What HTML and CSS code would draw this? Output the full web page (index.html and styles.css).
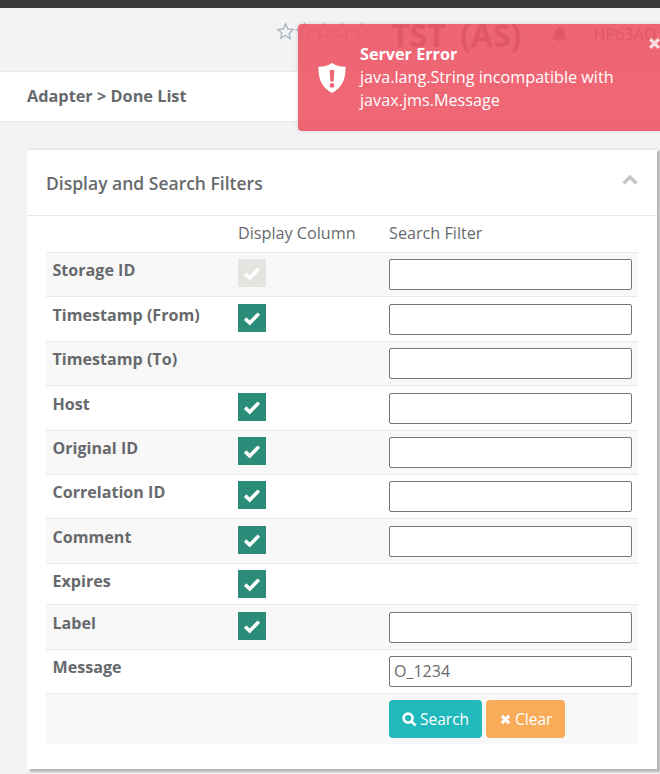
FILE: index.html
```html
<!DOCTYPE html>
<html lang="en">
<head>
<meta charset="utf-8">
<title>Adapter &gt; Done List</title>
<link rel="stylesheet" href="styles.css">
</head>
<body>
<div class="topbar"></div>
<header class="header">
  <div class="stars">
    <svg class="star star-main" viewBox="0 0 24 24"><path d="M12 2.500l2.900 6.300 6.900.8-5.100 4.700 1.400 6.800L12 17l-6.100 3.400 1.400-6.800L2.200 9.600l6.900-.8z"/></svg>
    <svg class="star" viewBox="0 0 24 24"><path d="M12 2.500l2.900 6.300 6.900.8-5.100 4.700 1.400 6.800L12 17l-6.100 3.400 1.400-6.800L2.200 9.600l6.900-.8z"/></svg>
    <svg class="star" viewBox="0 0 24 24"><path d="M12 2.500l2.900 6.300 6.900.8-5.100 4.700 1.400 6.800L12 17l-6.100 3.400 1.400-6.800L2.200 9.600l6.900-.8z"/></svg>
    <svg class="star" viewBox="0 0 24 24"><path d="M12 2.500l2.900 6.300 6.900.8-5.100 4.700 1.400 6.800L12 17l-6.100 3.400 1.400-6.800L2.200 9.600l6.900-.8z"/></svg>
    <svg class="star" viewBox="0 0 24 24"><path d="M12 2.500l2.900 6.300 6.900.8-5.100 4.700 1.400 6.800L12 17l-6.100 3.400 1.400-6.800L2.200 9.600l6.900-.8z"/></svg>
  </div>
  <div class="instance">TST (AS)</div>
  <svg class="bell" viewBox="0 0 24 24"><path d="M12 1.500c1 0 1.600.7 1.600 1.600 3.400.8 5.400 3.500 5.400 7 0 4.500 1 6.400 3 8.400v1.500H2v-1.500c2-2 3-3.900 3-8.400 0-3.500 2-6.200 5.400-7 0-.9.600-1.600 1.600-1.600zM9.500 21h5a2.500 2.500 0 0 1-5 0z"/></svg>
  <div class="user">HP63AQ</div>
</header>
<div class="breadcrumb">Adapter &gt; Done List</div>
<main class="content">
  <section class="card">
    <div class="card-title">
      <h2>Display and Search Filters</h2>
      <svg class="chevron" viewBox="0 0 16 10"><path d="M1.500 8.500L8 2l6.500 6.500"/></svg>
    </div>
    <div class="card-body">
      <div class="row row-head"><div></div><div>Display Column</div><div>Search Filter</div></div>
      <div class="row odd"><div class="name">Storage ID</div><div><span class="check check-off"><svg viewBox="0 0 16 16"><path d="M2.500 8.500l3.700 3.500 7.300-7.500"/></svg></span></div><div><input class="field" type="text"></div></div>
      <div class="row"><div class="name">Timestamp (From)</div><div><span class="check"><svg viewBox="0 0 16 16"><path d="M2.500 8.500l3.700 3.500 7.300-7.500"/></svg></span></div><div><input class="field" type="text"></div></div>
      <div class="row odd"><div class="name">Timestamp (To)</div><div></div><div><input class="field" type="text"></div></div>
      <div class="row"><div class="name">Host</div><div><span class="check"><svg viewBox="0 0 16 16"><path d="M2.500 8.500l3.700 3.500 7.300-7.500"/></svg></span></div><div><input class="field" type="text"></div></div>
      <div class="row odd"><div class="name">Original ID</div><div><span class="check"><svg viewBox="0 0 16 16"><path d="M2.500 8.500l3.700 3.500 7.300-7.500"/></svg></span></div><div><input class="field" type="text"></div></div>
      <div class="row"><div class="name">Correlation ID</div><div><span class="check"><svg viewBox="0 0 16 16"><path d="M2.500 8.500l3.700 3.500 7.300-7.500"/></svg></span></div><div><input class="field" type="text"></div></div>
      <div class="row odd"><div class="name">Comment</div><div><span class="check"><svg viewBox="0 0 16 16"><path d="M2.500 8.500l3.700 3.500 7.300-7.500"/></svg></span></div><div><input class="field" type="text"></div></div>
      <div class="row row-short"><div class="name">Expires</div><div><span class="check"><svg viewBox="0 0 16 16"><path d="M2.500 8.500l3.700 3.500 7.300-7.500"/></svg></span></div><div></div></div>
      <div class="row odd"><div class="name">Label</div><div><span class="check"><svg viewBox="0 0 16 16"><path d="M2.500 8.500l3.700 3.500 7.300-7.500"/></svg></span></div><div><input class="field" type="text"></div></div>
      <div class="row"><div class="name">Message</div><div></div><div><input class="field" type="text" value="O_1234"></div></div>
      <div class="row odd row-actions"><div></div><div></div><div class="actions">
        <button class="btn btn-search" type="button"><svg viewBox="0 0 16 16"><circle cx="6.500" cy="6.500" r="4.800"/><path d="M10 10l4.500 4.500"/></svg>Search</button>
        <button class="btn btn-clear" type="button"><svg class="icon-x" viewBox="0 0 16 16"><path d="M3.500 3.500l9 9M12.500 3.500l-9 9"/></svg>Clear</button>
      </div></div>
    </div>
  </section>
</main>
<aside class="toast">
  <svg class="shield" viewBox="0 0 28 30"><path fill-rule="evenodd" d="M14 0c3 2.400 7.600 3.600 13.500 3.700C27.800 15 25 24 14 30 3 24 .2 15 .5 3.700 6.400 3.600 11 2.400 14 0zM11.700 7l.7 11.500h3.200L16.300 7zM14 20a2.400 2.400 0 1 0 0 4.800 2.400 2.400 0 0 0 0-4.800z"/></svg>
  <div class="toast-text">
    <div class="toast-title">Server Error</div>
    <div>java.lang.String incompatible with javax.jms.Message</div>
  </div>
  <svg class="toast-close" viewBox="0 0 12 12"><path d="M2 2l8 8M10 2l-8 8"/></svg>
</aside>
</body>
</html>
```

FILE: styles.css
```css
* { box-sizing: border-box; }
html, body { margin: 0; height: 100%; overflow: hidden; }
body {
  position: relative;
  background: #f3f3f4;
  color: #676a6c;
  font-family: "Open Sans", sans-serif;
  font-size: 16.2px;
}
.topbar { height: 8px; background: #3a3a3a; }
.header {
  height: 63px;
  display: flex;
  align-items: flex-start;
  padding: 14px 0 0 276px;
  white-space: nowrap;
}
.stars { display: flex; gap: 0; margin-right: 20px; }
.star { width: 19px; height: 19px; fill: none; stroke: #a9b4c0; stroke-width: 1.700; }
.instance { margin-top: -7px; font-size: 32px; font-weight: 700; line-height: 40px; word-spacing: 6px; }
.bell { width: 17px; height: 18px; margin: 3px 0 0 30px; fill: #676a6c; }
.user { margin: 1px 0 0 25px; line-height: 22px; }
.breadcrumb {
  height: 51px;
  padding-left: 27px;
  line-height: 49px;
  background: #fff;
  border-top: 1px solid #e7eaec;
  border-bottom: 1px solid #e7eaec;
  font-weight: 700;
  font-size: 16.300px;
}
.content { padding: 26px 3px 0 27px; }
.card {
  height: 621px;
  background: #fff;
  border-top: 2px solid #e7eaec;
  box-shadow: 3px 3px 2px #b5b5b5;
}
.card-title {
  height: 66px;
  padding: 0 19px;
  display: flex;
  align-items: center;
  justify-content: space-between;
  border-bottom: 1px solid #e7eaec;
}
.card-title h2 { margin: 0; font-size: 17.500px; font-weight: 600; }
.chevron { width: 16px; height: 10px; margin-top: -5px; fill: none; stroke: #c4c6c8; stroke-width: 3.400; }
.card-body { padding: 0 19px; }
.row {
  display: grid;
  grid-template-columns: 192px 151px 1fr;
  height: 44.400px;
  border-bottom: 1px solid #e7eaec;
}
.row.odd { background: #f8f8f8; }
.row > div { padding-top: 6.400px; }
.row .name { padding: 5.400px 0 0 6.500px; font-weight: 700; font-size: 16.100px; line-height: 24px; }
.row.row-head { height: 37px; }
.row.row-head > div { padding-top: 4px; line-height: 26px; }
.row.row-short { height: 41.400px; }
.row.row-actions { height: 50px; border-bottom: 0; }
.check {
  display: flex;
  align-items: center;
  justify-content: center;
  width: 28px;
  height: 28px;
  background: #2a8c79;
}
.check svg { width: 20px; height: 20px; fill: none; stroke: #fff; stroke-width: 2.800; }
.check-off { background: #e5e4e0; }
.field {
  display: block;
  width: 243px;
  height: 31px;
  padding: 0 4px;
  border: 1px solid #767676;
  border-radius: 2px;
  background: #fff;
  color: #676a6c;
  font-family: inherit;
  font-size: 16px;
}
.actions { display: flex; gap: 4px; }
.btn {
  display: flex;
  align-items: center;
  gap: 3px;
  height: 38px;
  padding: 0 13px;
  border: 0;
  border-radius: 4px;
  color: #fff;
  font-family: inherit;
  font-size: 15.500px;
}
.btn svg { flex: none; width: 15px; height: 15px; fill: none; stroke: #fff; stroke-width: 2.800; }
.btn svg.icon-x { width: 13px; height: 13px; stroke-width: 4; }
.btn-search { width: 93px; background: #21b9bb; }
.btn-clear { width: 79px; background: #f8ac59; }
.toast {
  position: absolute;
  left: 298px;
  top: 24px;
  width: 372px;
  height: 107px;
  display: flex;
  padding: 19px 30px 0 20px;
  background: rgba(237, 85, 101, 0.9);
  border-radius: 4px 0 0 4px;
  box-shadow: 0 0 4px rgba(0, 0, 0, 0.15);
  color: #fff;
  line-height: 23px;
}
.shield { flex: none; width: 28px; height: 30px; margin: 20px 14px 0 0; fill: #fff; }
.toast-text { width: 270px; }
.toast-title { font-weight: 700; }
.toast-close { position: absolute; left: 350px; top: 13px; width: 13px; height: 13px; fill: none; stroke: #fff; stroke-width: 3; opacity: .8; }
```
